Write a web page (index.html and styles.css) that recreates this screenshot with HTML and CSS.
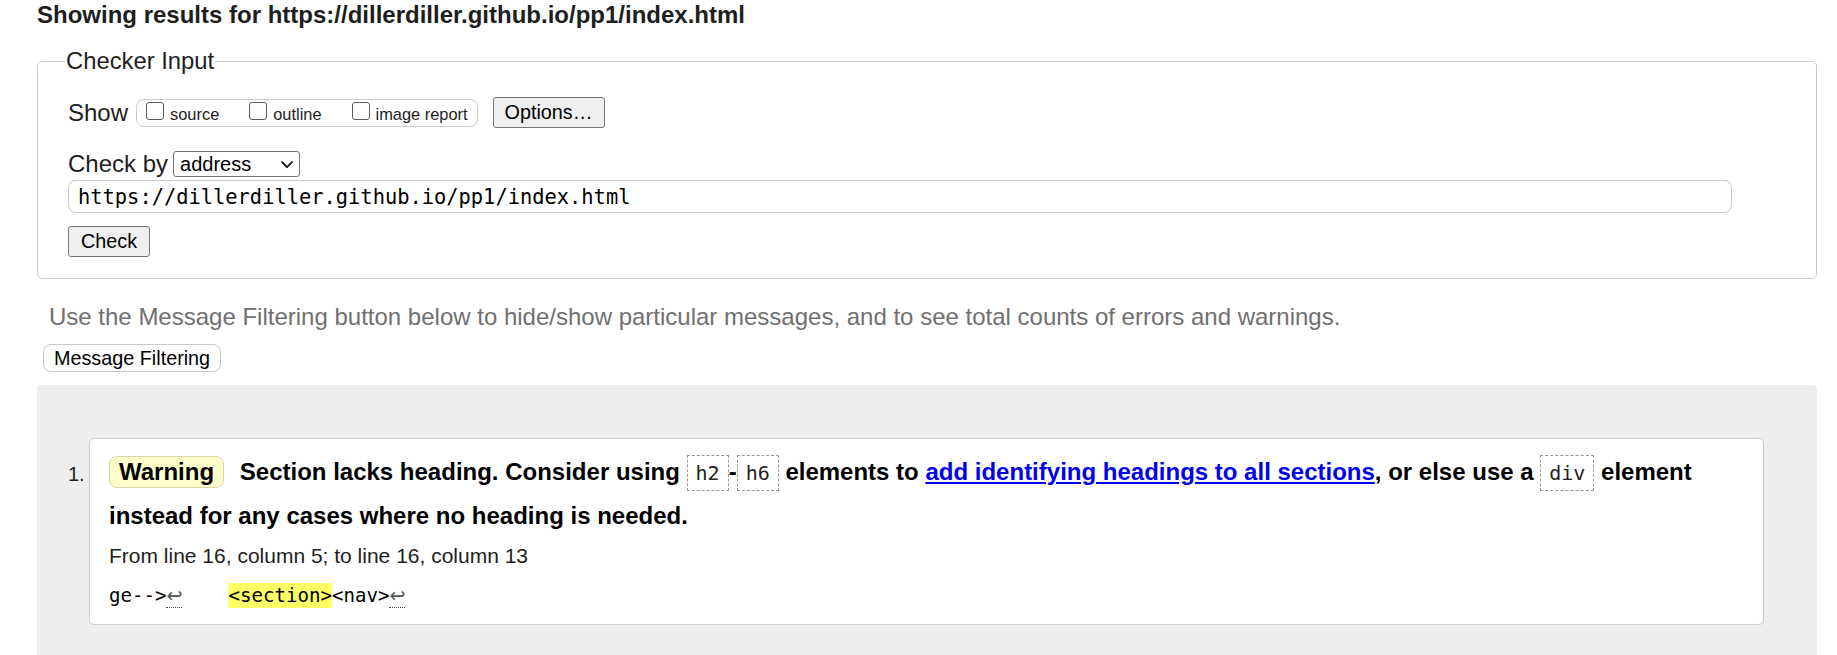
FILE: index.html
```html
<!DOCTYPE html>
<html lang="en">
<head>
<meta charset="utf-8">
<title>Nu Html Checker</title>
<link rel="stylesheet" href="styles.css">
</head>
<body>
<h2 class="results-title">Showing results for https://dillerdiller.github.io/pp1/index.html</h2>
<form class="checker-form">
  <fieldset class="checker">
    <legend class="checker-legend">Checker Input</legend>
    <div class="row row-show">
      <span class="show-label">Show</span>
      <fieldset class="show-options">
        <label class="opt"><input type="checkbox" class="cb"><span class="opt-text">source</span></label>
        <label class="opt"><input type="checkbox" class="cb"><span class="opt-text">outline</span></label>
        <label class="opt"><input type="checkbox" class="cb"><span class="opt-text">image report</span></label>
      </fieldset>
      <button type="button" class="btn btn-options">Options…</button>
    </div>
    <div class="row row-checkby">
      <label class="checkby-label" for="docselect">Check by</label>
      <span class="select-wrap">
        <select id="docselect" class="select">
          <option>address</option>
          <option>file upload</option>
          <option>text input</option>
        </select>
        <svg class="select-chevron" width="12" height="8" viewBox="0 0 12 8" aria-hidden="true"><path d="M1 1.2 L6 6.2 L11 1.2" fill="none" stroke="#1a1a1a" stroke-width="1.9" stroke-linecap="round" stroke-linejoin="round"/></svg>
      </span>
    </div>
    <input class="url-input" type="url" value="https://dillerdiller.github.io/pp1/index.html">
    <button type="submit" class="btn btn-check">Check</button>
  </fieldset>
</form>
<p class="hint">Use the Message Filtering button below to hide/show particular messages, and to see total counts of errors and warnings.</p>
<button type="button" class="btn-filter">Message Filtering</button>
<div class="results">
  <ol class="messages">
    <li class="message">
      <span class="msg-num">1.</span>
      <div class="msg-card">
        <p class="msg-text"><strong class="badge">Warning</strong> <span>Section lacks heading. Consider using <code class="code-box">h2</code>-<code class="code-box">h6</code> elements to <a class="msg-link" href="#">add identifying headings to all sections</a>, or else use a <code class="code-box">div</code> element instead for any cases where no heading is needed.</span></p>
        <p class="msg-location">From line 16, column 5; to line 16, column 13</p>
        <p class="msg-extract"><code class="extract">ge--&gt;<span class="lf">↩</span>    <mark class="hl">&lt;section&gt;</mark>&lt;nav&gt;<span class="lf">↩</span></code></p>
      </div>
    </li>
  </ol>
</div>
</body>
</html>
```

FILE: styles.css
```css
* {
  box-sizing: border-box;
}

html,
body {
  margin: 0;
  background: #ffffff;
}

body {
  padding: 1px 20px 0 37px;
  font-family: "Liberation Sans", Arial, sans-serif;
  font-size: 24px;
  line-height: 28px;
  color: #1e1e1e;
}

.results-title {
  margin: 0 0 18px;
  font-size: 24px;
  font-weight: bold;
  line-height: 28px;
  color: #1e1e1e;
}

.checker-form {
  margin: 0;
}

.checker {
  margin: 0;
  padding: 22px 30px 21px;
  border: 1px solid #cbcbcb;
  border-radius: 5px;
  min-inline-size: 0;
}

.checker-legend {
  padding: 0 1px;
  margin-left: -3px;
  font-size: 23.8px;
  line-height: 28px;
}

.row {
  display: flex;
  align-items: center;
}

.row-show {
  height: 31px;
}

.show-label {
  margin-right: 8px;
}

.show-options {
  display: flex;
  align-items: center;
  gap: 30px;
  height: 28px;
  margin: 0;
  padding: 0 9px;
  border: 1px solid #cbcbcb;
  border-radius: 8px;
  min-inline-size: 0;
}

.opt {
  display: flex;
  align-items: baseline;
  font-size: 16.4px;
  line-height: 20px;
  color: #1e1e1e;
}

.cb {
  appearance: none;
  -webkit-appearance: none;
  width: 18px;
  height: 18px;
  margin: 0 6px 0 0;
  border: 1.5px solid #5c5c5c;
  border-radius: 3px;
  background: #ffffff;
}

.btn {
  height: 31px;
  padding: 0 12px;
  font-family: "Liberation Sans", Arial, sans-serif;
  font-size: 19.8px;
  color: #000000;
  background: #efefef;
  border: 1px solid #767676;
  border-radius: 3px;
}

.btn-options {
  margin-left: 15px;
  padding: 0 11px;
}

.row-checkby {
  height: 28px;
  margin-top: 22px;
}

.checkby-label {
  margin-right: 5px;
}

.select-wrap {
  position: relative;
  display: inline-block;
  width: 127px;
  height: 26px;
}

.select {
  appearance: none;
  -webkit-appearance: none;
  display: block;
  width: 127px;
  height: 26px;
  margin: 0;
  padding: 0 0 0 6px;
  font-family: "Liberation Sans", Arial, sans-serif;
  font-size: 20px;
  color: #000000;
  background: #ffffff;
  border: 1px solid #767676;
  border-radius: 3px;
}

.select-chevron {
  position: absolute;
  right: 7px;
  top: 10px;
}

.url-input {
  display: block;
  width: 1664px;
  height: 33px;
  margin: 2px 0 0;
  padding: 0 9px;
  font-family: "DejaVu Sans Mono", "Liberation Mono", monospace;
  font-size: 20.4px;
  color: #000000;
  background: #ffffff;
  border: 1px solid #c8c8c8;
  border-radius: 8px;
}

.btn-check {
  display: block;
  margin-top: 13px;
}

.hint {
  margin: 24px 0 0 12px;
  color: #707070;
  line-height: 28px;
}

.btn-filter {
  display: block;
  height: 28px;
  margin: 13px 0 0 6px;
  padding: 0 10px;
  font-family: "Liberation Sans", Arial, sans-serif;
  font-size: 19.8px;
  color: #000000;
  background: #ffffff;
  border: 1px solid #c8c8c8;
  border-radius: 8px;
}

.results {
  margin-top: 13px;
  padding: 53px 53px 60px 31px;
  background: #eeeeee;
  border-radius: 4px;
}

.messages {
  margin: 0;
  padding: 0;
  list-style: none;
}

.message {
  display: flex;
  align-items: flex-start;
}

.msg-num {
  flex: none;
  width: 21px;
  padding-top: 14px;
  font-size: 20px;
  line-height: 44px;
  color: #1e1e1e;
}

.msg-card {
  flex: 1;
  padding: 11px 20px 15px 19px;
  background: #ffffff;
  border: 1px solid #cbcbcb;
  border-radius: 5px;
}

.msg-text {
  margin: 0;
  font-size: 24px;
  font-weight: bold;
  line-height: 44px;
  color: #000000;
}

.badge {
  display: inline-block;
  margin-right: 9px;
  padding: 0 9px;
  line-height: 30px;
  background: #ffffcc;
  border: 1px solid #d9d6a8;
  border-radius: 8px;
}

.code-box {
  display: inline-block;
  padding: 0 8px;
  font-family: "DejaVu Sans Mono", "Liberation Mono", monospace;
  font-size: 20px;
  font-weight: normal;
  line-height: 34px;
  color: #222222;
  background: #ffffff;
  border: 1px dashed #999999;
}

.msg-link {
  color: #0000ee;
  text-decoration: underline;
}

.msg-location {
  margin: 5px 0 0;
  font-size: 21px;
  line-height: 26px;
  color: #1e1e1e;
}

.msg-extract {
  margin: 12px 0 0;
  line-height: 26px;
}

.extract {
  white-space: pre;
  font-family: "DejaVu Sans Mono", "Liberation Mono", monospace;
  font-size: 19.1px;
  color: #000000;
}

.hl {
  padding: 1px 0;
  color: #000000;
  background: #ffff66;
}

.lf {
  font-family: "DejaVu Sans", sans-serif;
  color: #555555;
  border-bottom: 1px dotted #444444;
}
```
